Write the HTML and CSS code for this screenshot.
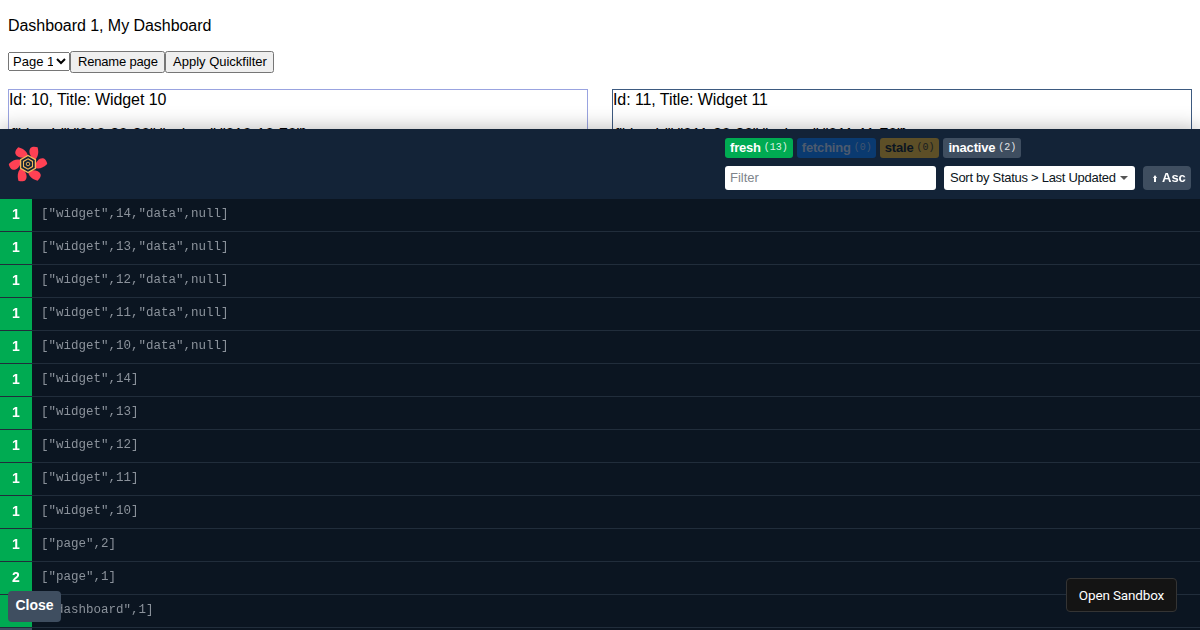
FILE: index.html
```html
<!DOCTYPE html>
<html lang="en">
<head>
<meta charset="utf-8">
<title>Dashboard</title>
<link rel="stylesheet" href="styles.css">
</head>
<body>
<p class="title">Dashboard 1, My Dashboard</p>
<div class="toolbar">
  <select class="page-select"><option>Page 1</option><option>Page 2</option></select><button class="tool-btn btn-rename">Rename page</button><button class="tool-btn btn-apply">Apply Quickfilter</button>
</div>
<div class="widgets">
  <div class="widget widget-a">
    <div class="widget-title">Id: 10, Title: Widget 10</div>
    <div class="widget-data">{"dataId":"010-20-30","values":"010-10-70"}</div>
  </div>
  <div class="widget widget-b">
    <div class="widget-title">Id: 11, Title: Widget 11</div>
    <div class="widget-data">{"dataId":"011-20-30","values":"011-11-70"}</div>
  </div>
</div>

<section class="devtools">
  <header class="dt-header">
    <svg class="logo" viewBox="-20 -20 40 40" width="40" height="40" aria-hidden="true">
      <g fill="#ff4154">
        <path d="M6 3.500C8-3 11.500-6.300 15-5.800c2.500.4 4 3.800 4.200 5.800C15 4.300 10 5.500 6 3.500z"/>
        <path d="M6 3.500C8-3 11.500-6.300 15-5.800c2.500.4 4 3.800 4.200 5.800C15 4.300 10 5.500 6 3.500z" transform="rotate(60)"/>
        <path d="M6 3.500C8-3 11.500-6.300 15-5.800c2.500.4 4 3.800 4.200 5.800C15 4.300 10 5.500 6 3.500z" transform="rotate(120)"/>
        <path d="M6 3.500C8-3 11.500-6.300 15-5.800c2.500.4 4 3.800 4.200 5.800C15 4.300 10 5.500 6 3.500z" transform="rotate(180)"/>
        <path d="M6 3.500C8-3 11.500-6.300 15-5.800c2.500.4 4 3.800 4.200 5.800C15 4.300 10 5.500 6 3.500z" transform="rotate(240)"/>
        <path d="M6 3.500C8-3 11.500-6.300 15-5.800c2.500.4 4 3.800 4.200 5.800C15 4.300 10 5.500 6 3.500z" transform="rotate(300)"/>
      </g>
      <polygon points="0,-8.500 7.400,-4.250 7.400,4.250 0,8.500 -7.400,4.250 -7.400,-4.250" fill="#132337" stroke="#f4b75a" stroke-width="1.400"/>
      <polygon points="0,-5.200 4.500,-2.600 4.500,2.600 0,5.200 -4.500,2.600 -4.500,-2.600" fill="none" stroke="#f4b75a" stroke-width="1.100"/>
      <circle r="1.800" fill="none" stroke="#f4b75a" stroke-width="0.900"/>
    </svg>
    <div class="dt-controls">
      <div class="tags">
        <span class="tag tag-fresh">fresh<code class="count">(13)</code></span>
        <span class="tag tag-fetching">fetching<code class="count">(0)</code></span>
        <span class="tag tag-stale">stale<code class="count">(0)</code></span>
        <span class="tag tag-inactive">inactive<code class="count">(2)</code></span>
      </div>
      <div class="filters">
        <input class="filter" type="text" placeholder="Filter">
        <select class="sort"><option>Sort by Status &gt; Last Updated</option></select>
        <button class="dt-btn asc-btn"><svg class="asc-arrow" viewBox="0 0 4 7" width="4" height="7" aria-hidden="true"><path d="M2 0l2 3H3v4H1V3H0z" fill="#fff"/></svg>Asc</button>
      </div>
    </div>
  </header>
  <div class="rows">
    <div class="row"><span class="num">1</span><code class="key">["widget",14,"data",null]</code></div>
    <div class="row"><span class="num">1</span><code class="key">["widget",13,"data",null]</code></div>
    <div class="row"><span class="num">1</span><code class="key">["widget",12,"data",null]</code></div>
    <div class="row"><span class="num">1</span><code class="key">["widget",11,"data",null]</code></div>
    <div class="row"><span class="num">1</span><code class="key">["widget",10,"data",null]</code></div>
    <div class="row"><span class="num">1</span><code class="key">["widget",14]</code></div>
    <div class="row"><span class="num">1</span><code class="key">["widget",13]</code></div>
    <div class="row"><span class="num">1</span><code class="key">["widget",12]</code></div>
    <div class="row"><span class="num">1</span><code class="key">["widget",11]</code></div>
    <div class="row"><span class="num">1</span><code class="key">["widget",10]</code></div>
    <div class="row"><span class="num">1</span><code class="key">["page",2]</code></div>
    <div class="row"><span class="num">2</span><code class="key">["page",1]</code></div>
    <div class="row"><span class="num">1</span><code class="key">["dashboard",1]</code></div>
    <div class="row row-empty"><span class="num num-inactive"></span></div>
  </div>
  <button class="dt-btn close-btn">Close</button>
</section>
<button class="sandbox-btn">Open Sandbox</button>
</body>
</html>
```
FILE: styles.css
```css
html, body {
  height: 100%;
  overflow: hidden;
}
body {
  margin: 8px;
  font-family: "Liberation Sans", Arial, sans-serif;
  font-size: 16px;
  color: #000;
}
.title {
  margin: 0;
  padding-top: 9px;
  line-height: 18px;
  letter-spacing: -0.05px;
}
.toolbar {
  display: flex;
  align-items: center;
  margin-top: 16px;
  height: 22px;
}
.page-select, .tool-btn {
  font-family: "Liberation Sans", Arial, sans-serif;
  font-size: 13px;
  box-sizing: border-box;
}
.page-select {
  width: 62px;
  height: 19px;
  padding-bottom: 1px;
  margin-bottom: 1px;
}
.tool-btn {
  height: 22px;
  padding: 0 7px 2px 6px;
  white-space: nowrap;
}
.btn-rename { width: 95px; letter-spacing: -0.18px; }
.btn-apply { width: 109px; }
.widgets {
  display: flex;
  gap: 24px;
  margin-top: 16px;
}
.widget {
  flex: 1;
  height: 200px;
  border: 1px solid #3d5a80;
  box-sizing: border-box;
}
.widget-a { border-color: #99a3e0; }
.widget-title { line-height: 18px; margin-top: 1px; letter-spacing: -0.08px; }
.widget-data { margin-top: 17px; padding-left: 1px; line-height: 18px; letter-spacing: -0.21px; }

.devtools {
  position: fixed;
  left: 0;
  right: 0;
  bottom: 0;
  height: 501px;
  background: #0b1521;
  color: #fff;
  font-size: 14px;
  box-shadow: 0 0 20px rgba(0, 0, 0, 0.3);
  overflow: hidden;
}
.dt-header {
  display: flex;
  justify-content: space-between;
  align-items: center;
  height: 70px;
  box-sizing: border-box;
  padding: 0 9px 0 8px;
  background: #132337;
}
.logo { display: block; margin-top: -1px; }
.dt-controls {
  display: flex;
  flex-direction: column;
  gap: 8px;
  width: 466px;
}
.tags {
  display: flex;
  gap: 4px;
  height: 20px;
}
.tag {
  display: flex;
  align-items: center;
  gap: 3px;
  padding: 0 5px 1px;
  border-radius: 3px;
  font-size: 13px;
  font-weight: 700;
  letter-spacing: -0.2px;
}
.count {
  font-family: "Liberation Mono", monospace;
  font-weight: 400;
  font-size: 10px;
  letter-spacing: 0;
  opacity: 0.85;
}
.tag-fresh { background: #00ab52; color: #fff; }
.tag-fetching { background: #0a3a70; color: #4d5b6e; padding-right: 4px; }
.tag-stale { background: #5d4f27; color: #0b1521; }
.tag-inactive { background: #3f4e60; color: #fff; }
.filters {
  display: flex;
  gap: 8px;
  height: 24px;
  align-items: stretch;
}
.filter {
  width: 211px;
  box-sizing: border-box;
  border: 0;
  border-radius: 3px;
  padding: 0 5px 2px;
  font: 13px "Liberation Sans", Arial, sans-serif;
  background: #fff;
  color: #0b1521;
}
.filter::placeholder { color: #80858c; }
.sort {
  width: 191px;
  box-sizing: border-box;
  border: 0;
  border-radius: 3px;
  padding: 0 0 2px 6px;
  appearance: none;
  font: 13px "Liberation Sans", Arial, sans-serif;
  letter-spacing: -0.28px;
  color: #0b1521;
  background: #fff url("data:image/svg+xml,%3Csvg xmlns='http://www.w3.org/2000/svg' width='8' height='4'%3E%3Cpath d='M0 0h8L4 4z' fill='%23555'/%3E%3C/svg%3E") no-repeat right 7px center;
}
.dt-btn {
  border: 0;
  border-radius: 4px;
  background: #3f4e60;
  color: #fff;
  font: 700 14px "Liberation Sans", Arial, sans-serif;
}
.asc-btn {
  display: flex;
  align-items: center;
  gap: 5px;
  width: 48px;
  padding: 0 0 1px 10px;
  box-sizing: border-box;
  font-size: 13px;
}
.asc-arrow { flex: none; margin-top: 2px; }
.rows { display: flex; flex-direction: column; }
.row {
  display: flex;
  align-items: center;
  height: 33px;
  box-sizing: border-box;
  border-bottom: 1px solid #212d3b;
}
.num {
  display: flex;
  align-items: center;
  justify-content: center;
  flex: none;
  width: 32px;
  height: 32px;
  padding-bottom: 2px;
  box-sizing: border-box;
  background: #00ab52;
  font-weight: 700;
}
.num-inactive { background: #3f4e60; }
.key {
  padding: 0 0 2px 9px;
  font-family: "Liberation Mono", monospace;
  font-size: 12.5px;
  color: #8b929b;
}
.close-btn {
  position: absolute;
  left: 8px;
  bottom: 8px;
  width: 53px;
  height: 31px;
  padding: 0 0 4px;
}
.sandbox-btn {
  position: fixed;
  left: 1066px;
  top: 578px;
  width: 111px;
  height: 34px;
  padding: 0 0 1px;
  box-sizing: border-box;
  background: #141414;
  border: 1px solid #343434;
  border-radius: 4px;
  color: #fff;
  font: 13.5px Roboto, sans-serif;
  letter-spacing: -0.15px;
}
```
